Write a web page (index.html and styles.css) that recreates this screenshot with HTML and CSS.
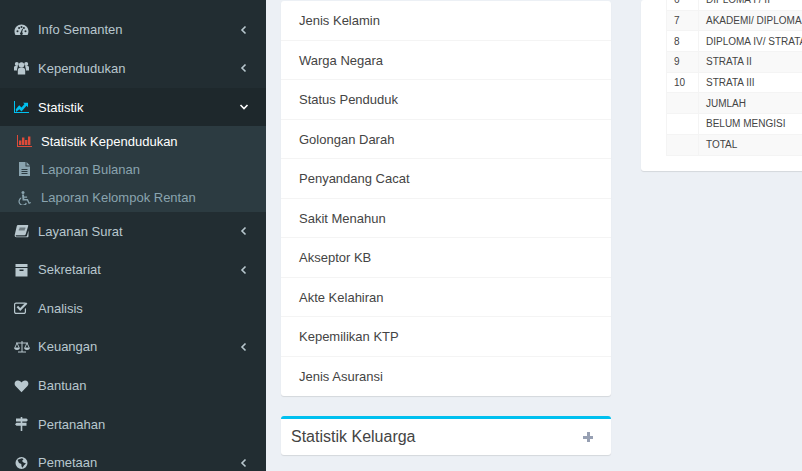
FILE: index.html
```html
<!DOCTYPE html>
<html lang="en">
<head>
  <meta charset="UTF-8">
  <meta name="viewport" content="width=device-width, initial-scale=1.0">
  <title>Statistik Kependudukan</title>
  <link rel="stylesheet" href="styles.css">
</head>
<body>
  <div class="wrapper">
    <!-- sidebar -->
    <aside class="sidebar">
      <a class="menu-item">
        <svg class="icon" viewBox="0 0 14 14"><path fill-rule="evenodd" d="M7 1.500C3.100 1.500 0 4.600 0 8.500c0 1.300.3 2.400.9 3.500h12.200c.6-1.100.9-2.200.9-3.500 0-3.900-3.100-7-7-7zM3 9.300a1 1 0 1 1 0-2 1 1 0 0 1 0 2zm1.600-3.400a1 1 0 1 1 0-2 1 1 0 0 1 0 2zM7 4.900a1 1 0 1 1 0-2 1 1 0 0 1 0 2zm1.300 5.600a1.400 1.400 0 1 1-2.200-1l1.600-3.700c.1-.3.900 0 .8.3L7.600 9.200c.5.2.7.7.7 1.300zM9.400 5.900a1 1 0 1 1 0-2 1 1 0 0 1 0 2zM11 9.300a1 1 0 1 1 0-2 1 1 0 0 1 0 2z"/></svg>
        <span class="menu-label">Info Semanten</span>
        <svg class="caret" viewBox="0 0 8 10"><path d="M5.500 1.500 2 5l3.500 3.500"/></svg>
      </a>
      <a class="menu-item">
        <svg class="icon" viewBox="0 0 15 14"><circle cx="7.500" cy="4" r="2.700"/><circle cx="2.800" cy="3" r="2"/><circle cx="12.200" cy="3" r="2"/><path d="M3.800 13.500V9.500c0-1.900 1-2.700 2-2.700h3.400c1 0 2 .8 2 2.700v4z"/><path d="M0 9.500V6.500c0-1 .6-1.500 1.500-1.500h2.300C3.900 5.700 3 7.300 3 9.500zM15 9.500V6.500c0-1-.6-1.500-1.500-1.500h-2.300c-.1.700.8 2.300.8 4.500z"/></svg>
        <span class="menu-label">Kependudukan</span>
        <svg class="caret" viewBox="0 0 8 10"><path d="M5.500 1.500 2 5l3.500 3.500"/></svg>
      </a>
      <a class="menu-item active">
        <svg class="icon" viewBox="0 0 15 14"><path d="M0 1h1v11h14v1H0z"/><path d="M1.800 9.300 5.200 5.300l2.300 2.300L10.500 4 9 2.700h5v4.500l-1.500-1.500-5 5.800-2.200-2.200-3.200 2.700z"/></svg>
        <span class="menu-label">Statistik</span>
        <svg class="caret" viewBox="0 0 10 8"><path d="M1.500 2 5 5.500 8.500 2"/></svg>
      </a>
      <div class="submenu">
        <a class="sub-item current">
          <svg class="icon" viewBox="0 0 15 14"><path d="M0 1h1v11h14v1H0z"/><path d="M2 6.500h2.400V11H2zM5 3.500h2.400V11H5zM8 6h2.400v5H8zM11 2.500h2.400V11H11z"/></svg>
          <span>Statistik Kependudukan</span>
        </a>
        <a class="sub-item">
          <svg class="icon" viewBox="0 0 14 14"><path fill-rule="evenodd" d="M1.500 0H8v4.500h4.500V14h-11zM4 7v1h6V7zm0 2v1h6V9zm0 2v1h6v-1zM9 0l3.500 3.500H9z"/></svg>
          <span>Laporan Bulanan</span>
        </a>
        <a class="sub-item">
          <svg class="icon" viewBox="0 0 14 14"><circle cx="5.500" cy="1.500" r="1.500"/><path d="M4.500 3.500h2l.1 2h3v1.300H6.700l.1 1.200h3.600l1.600 3.400 1-.5.500 1.100-2.200 1-1.800-3.600H5.100z"/><path d="M3.700 6.300v1.500a3.200 3.200 0 1 0 4.700 3.700l.9 1.300A4.500 4.500 0 1 1 3.700 6.300z"/></svg>
          <span>Laporan Kelompok Rentan</span>
        </a>
      </div>
      <a class="menu-item">
        <svg class="icon" viewBox="0 0 14 14"><path fill-rule="evenodd" d="M3.500 1H13c.6 0 .9.400.7 1l-2.500 8.200c-.2.600-.7 1-1.300 1H2c-.6 0-.9.400-.8.800.1.300.4.500.8.500h9.700c.3 0 .6-.2.700-.5L14 6.500v5.700c0 .5-.5 1-1 1H2c-1.200 0-2-1-1.800-2.300L2.300 2c.2-.6.600-1 1.200-1zM5 3.700l-.2.800h6l.2-.8zM4.400 5.500l-.2.800h6l.2-.8z"/></svg>
        <span class="menu-label">Layanan Surat</span>
        <svg class="caret" viewBox="0 0 8 10"><path d="M5.500 1.500 2 5l3.500 3.500"/></svg>
      </a>
      <a class="menu-item">
        <svg class="icon" viewBox="0 0 14 14"><path fill-rule="evenodd" d="M1 1h12v3H1zM1 5h12v8.500H1zM5 6.500V8h4V6.500z"/></svg>
        <span class="menu-label">Sekretariat</span>
        <svg class="caret" viewBox="0 0 8 10"><path d="M5.500 1.500 2 5l3.500 3.500"/></svg>
      </a>
      <a class="menu-item">
        <svg class="icon" viewBox="0 0 15 14"><path fill-rule="evenodd" d="M2 1.500h9v1.300H2c-.5 0-.8.300-.8.800v7.300c0 .5.300.8.800.8h8c.5 0 .8-.3.800-.8V8L12 6.900v4c0 1.200-.9 2.100-2 2.100H2c-1.100 0-2-.9-2-2.100V3.600c0-1.200.9-2.100 2-2.100z"/><path d="m2.600 6.300 1.500-1.500 2.100 2.100 5.700-5.700 1.500 1.500L6.200 10z"/></svg>
        <span class="menu-label">Analisis</span>
      </a>
      <a class="menu-item">
        <svg class="icon wide" viewBox="0 0 16 14"><path d="M7.500 1h1v10.500h3.500v1H4v-1h3.500z"/><path d="M2 2.500h12v1H2z"/><path fill="none" stroke="currentColor" stroke-width=".9" d="M3 3 .7 8h4.600zM13 3l-2.300 5h4.600z"/><path d="M.2 8h5.600c0 1.300-1.200 2-2.800 2S.2 9.300.2 8zM10.200 8h5.600c0 1.300-1.200 2-2.800 2s-2.800-.7-2.800-2z"/></svg>
        <span class="menu-label">Keuangan</span>
        <svg class="caret" viewBox="0 0 8 10"><path d="M5.500 1.500 2 5l3.500 3.500"/></svg>
      </a>
      <a class="menu-item">
        <svg class="icon" viewBox="0 0 14 14"><path d="M7 13.200 1 7C-.6 5.300-.1 1.800 3.300 1.600 5 1.500 6.300 2.600 7 3.600c.7-1 2-2.100 3.700-2 3.400.2 3.900 3.700 2.300 5.400z"/></svg>
        <span class="menu-label">Bantuan</span>
      </a>
      <a class="menu-item">
        <svg class="icon" viewBox="0 0 14 14"><path d="M6.200 0h1.600v1.500H12L13.500 3 12 4.500H7.800v1.300H12v3H7.800V14H6.200V8.800H2L.5 7.300 2 5.800h4.200V4.500H1.500v-3h4.700z"/></svg>
        <span class="menu-label">Pertanahan</span>
      </a>
      <a class="menu-item">
        <svg class="icon" viewBox="0 0 14 14"><path fill-rule="evenodd" d="M7 1a6 6 0 1 1 0 12A6 6 0 0 1 7 1zM3 3.800 4.500 7l2.300 1 .2 2.200 1 1.500 1.500-2.500L11.500 7.500 9 6.500 7.500 5 9 3.300 7.500 2.300z"/></svg>
        <span class="menu-label">Pemetaan</span>
        <svg class="caret" viewBox="0 0 8 10"><path d="M5.500 1.500 2 5l3.500 3.500"/></svg>
      </a>
    </aside>

    <main class="content">
      <section class="col-left">
        <div class="box">
          <ul class="stat-list">
            <li>Jenis Kelamin</li>
            <li>Warga Negara</li>
            <li>Status Penduduk</li>
            <li>Golongan Darah</li>
            <li>Penyandang Cacat</li>
            <li>Sakit Menahun</li>
            <li>Akseptor KB</li>
            <li>Akte Kelahiran</li>
            <li>Kepemilikan KTP</li>
            <li>Jenis Asuransi</li>
          </ul>
        </div>
        <div class="box box-info">
          <h3 class="box-title">Statistik Keluarga</h3>
          <span class="box-plus"></span>
        </div>
      </section>

      <section class="col-right">
        <div class="box box-table">
          <table class="data-table">
            <tr><td class="num">6</td><td>DIPLOMA I / II</td></tr>
            <tr><td class="num">7</td><td>AKADEMI/ DIPLOMA III/ SARJANA MUDA</td></tr>
            <tr><td class="num">8</td><td>DIPLOMA IV/ STRATA I</td></tr>
            <tr><td class="num">9</td><td>STRATA II</td></tr>
            <tr><td class="num">10</td><td>STRATA III</td></tr>
            <tr><td class="num"></td><td>JUMLAH</td></tr>
            <tr><td class="num"></td><td>BELUM MENGISI</td></tr>
            <tr><td class="num"></td><td>TOTAL</td></tr>
          </table>
        </div>
      </section>
    </main>
  </div>
</body>
</html>
```

FILE: styles.css
```css
* {
  margin: 0;
  padding: 0;
  box-sizing: border-box;
}

html, body {
  height: 100%;
  overflow: hidden;
}

body {
  font-family: "Liberation Sans", Arial, sans-serif;
  font-size: 13px;
  color: #444;
  background-color: #ecf0f5;
}

.wrapper {
  display: flex;
  height: 471px;
  overflow: hidden;
}

/* sidebar */
.sidebar {
  flex: 0 0 266px;
  padding-top: 10.6px;
  background-color: #222d32;
  color: #b8c7ce;
}

.menu-item {
  display: flex;
  align-items: center;
  height: 38.6px;
  padding: 0 14px;
}

.menu-item.active {
  background-color: #1e282c;
  color: #fff;
}

.menu-item.active .icon {
  color: #00c0ef;
}

.menu-label {
  flex: 1;
  margin-left: 9px;
}

.icon {
  flex: 0 0 15px;
  width: 15px;
  height: 14px;
  fill: currentColor;
}

.icon.wide {
  flex-basis: 16px;
  width: 16px;
  margin-right: -1px;
}

.caret {
  width: 10px;
  height: 10px;
  margin-right: 3px;
  fill: none;
  stroke: currentColor;
  stroke-width: 1.6;
}

.submenu {
  height: 85.5px;
  padding-top: 0.5px;
  background-color: #2c3b41;
  color: #8aa4af;
}

.sub-item {
  display: flex;
  align-items: center;
  gap: 9px;
  height: 28.4px;
  padding-left: 17px;
}

.sub-item.current {
  color: #fff;
}

.sub-item.current .icon {
  color: #dd4b39;
}

/* content */
.content {
  flex: 1;
  display: flex;
  align-items: flex-start;
  min-width: 0;
  padding: 1px 0 0 15px;
  overflow: hidden;
}

.col-left {
  flex: 0 0 330px;
}

.col-right {
  flex: 0 0 340px;
  margin-left: 30px;
  margin-top: -1px;
}

.box {
  position: relative;
  background-color: #fff;
  border-radius: 3px;
  box-shadow: 0 1px 1px rgba(0, 0, 0, 0.1);
}

.stat-list {
  list-style: none;
}

.stat-list li {
  height: 39.5px;
  padding-left: 18px;
  line-height: 39px;
  border-bottom: 1px solid #f4f4f4;
}

.stat-list li:last-child {
  border-bottom: none;
}

.box-info {
  display: flex;
  align-items: center;
  height: 39px;
  margin-top: 20px;
  padding: 0 10px;
  border-top: 3px solid #00c0ef;
}

.box-title {
  flex: 1;
  font-size: 16px;
  font-weight: normal;
}

/* plus sign on the collapse button */
.box-plus {
  width: 10px;
  height: 10px;
  margin-right: 8px;
  background:
    linear-gradient(#97a0b3, #97a0b3) center / 10px 3px no-repeat,
    linear-gradient(#97a0b3, #97a0b3) center / 3px 10px no-repeat;
}

.box-table {
  height: 171px;
  padding-left: 25px;
  overflow: hidden;
}

.data-table {
  width: 315px;
  margin-top: -11px;
  border-collapse: collapse;
  font-size: 10px;
}

.data-table td {
  height: 20.7px;
  padding: 0 7px;
  border: 1px solid #f4f4f4;
  white-space: nowrap;
}

.data-table .num {
  width: 32px;
}

.data-table tr:nth-child(even) {
  background-color: #f9f9f9;
}
```
